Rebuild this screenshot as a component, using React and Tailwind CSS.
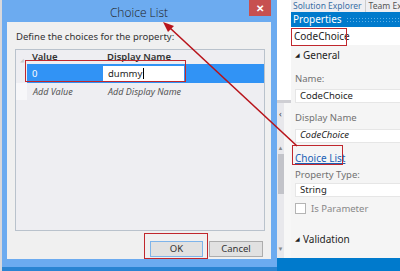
import React from 'react';

const font = "font-['Noto_Sans','Open_Sans',sans-serif]";

// Dialog "Choice List"
const ChoiceDialog = () => (
  <div className="flex h-[267px] w-[275px] shrink-0 flex-col bg-[#6cabf0] px-[5px] pr-[6px] pb-[8px]">
    {/* Title bar */}
    <div className="relative flex h-[22px] items-center justify-center pt-[3px]">
      <span className="font-['Open_Sans',sans-serif] text-[12px] font-light text-[#222]">Choice List</span>
      <div className="absolute right-0 top-0 flex h-[16px] w-[22px] items-center justify-center bg-[#c75050] text-[10px] font-bold leading-none text-white">
        ✕
      </div>
    </div>

    {/* Body */}
    <div className="flex flex-1 flex-col bg-[#f0f0f0] pt-[8px]">
      <div className="pl-[9px] text-[9.5px] text-[#333]">Define the choices for the property:</div>

      {/* Grid */}
      <div className="ml-[8px] mt-[5px] flex h-[182px] w-[250px] flex-col border border-[#b9c2cc] bg-[#eeeef2]">
        <div className="flex h-[14px] items-center">
          <div className="flex w-[11px] items-end justify-center self-stretch pb-[1px]">
            <span className="text-[5px] leading-none text-[#c8c8c8]">◢</span>
          </div>
          <span className="ml-[5px] w-[75px] text-[9.5px] font-semibold text-[#333]">Value</span>
          <span className="text-[9.5px] font-semibold text-[#333]">Display Name</span>
        </div>
        <div className="flex h-[19px] items-stretch">
          <div className="w-[11px] bg-[#eeeef2]" />
          <div className="flex flex-1 items-center bg-[#3193f5] pr-[2px]">
            <span className="ml-[5px] w-[71px] text-[9.5px] text-white">0</span>
            <div className="flex h-[16px] w-[81px] items-center bg-white pl-[5px] text-[9.5px] text-[#1e1e1e]">
              dummy<span className="ml-[1px] h-[11px] w-px bg-black" />
            </div>
          </div>
        </div>
        <div className="flex h-[17px] items-center">
          <div className="w-[11px] self-stretch bg-[#f7f7f9]" />
          <span className="ml-[6px] w-[75px] text-[9px] italic text-[#555]">Add Value</span>
          <span className="text-[9px] italic text-[#555]">Add Display Name</span>
        </div>
      </div>

      {/* Buttons */}
      <div className="mr-[8px] mt-[10px] flex justify-end gap-[6px]">
        <button className="flex h-[16px] w-[53px] items-center justify-center border border-[#7eb4ea] bg-[#e1e1e1] text-[9.5px] text-[#333]">
          OK
        </button>
        <button className="flex h-[16px] w-[54px] items-center justify-center border border-[#adadad] bg-[#e1e1e1] text-[9.5px] text-[#333]">
          Cancel
        </button>
      </div>
    </div>
  </div>
);

// Thin strip of the editor behind the dialog
const EditorStrip = () => (
  <div className="flex w-[14px] shrink-0 flex-col">
    <div className="h-[100px] bg-white" />
    <div className="h-[3px] bg-[#cfcfd4]" />
    <div className="flex flex-1">
      <div className="flex w-[7px] flex-col items-center bg-[#e8e8ec]">
        <span className="mt-[6px] text-[9px] leading-none text-[#444]">‹</span>
        <span className="mt-[27px] text-[6px] leading-none text-[#888]">▲</span>
        <div className="mt-[3px] h-[40px] w-[6px] bg-[#c2c3c9]" />
        <div className="flex-1" />
        <span className="mb-[6px] text-[6px] leading-none text-[#888]">▼</span>
      </div>
      <div className="flex-1 bg-[#f7f7f7]" />
    </div>
  </div>
);

const Field = ({ children, italic, className = 'mt-[3px]' }) => (
  <div className={`flex h-[14px] items-center border border-[#e6e6e6] bg-white pl-[4px] text-[9.5px] text-[#1e1e1e] ${italic ? 'italic' : ''} ${className}`}>
    {children}
  </div>
);

const Label = ({ children, className = '' }) => (
  <div className={`text-[9.5px] text-[#717171] ${className}`}>{children}</div>
);

const PropertiesPanel = () => (
  <div className="flex flex-1 flex-col overflow-hidden bg-[#f5f5f5]">
    {/* Tabs */}
    <div className="flex h-[12px] items-center overflow-hidden bg-[#eeeef2] text-[8.5px] leading-[12px] text-[#3b6ea5]">
      <span className="ml-[2px] whitespace-nowrap">Solution Explorer</span>
      <span className="ml-[3px] whitespace-nowrap border-l border-[#ccc] pl-[3px] text-[#555]">Team Ex</span>
    </div>
    {/* Title */}
    <div className="flex h-[15px] items-center bg-[#007acc] pl-[2px]">
      <span className="text-[10px] text-white">Properties</span>
      <div className="ml-[4px] h-[5px] flex-1 bg-[radial-gradient(circle,#5fb0e6_0.8px,transparent_0.9px)] bg-[length:3px_3px]" />
    </div>
    <div className="flex h-[18px] items-center bg-white pl-[3px] text-[10px] text-[#1e1e1e]">CodeChoice</div>

    <div className="flex flex-col pl-[4px]">
      <div className="mt-[3px] flex items-center gap-[3px] text-[10px] text-[#1e1e1e]">
        <span className="text-[6px]">◢</span>General
      </div>
      <Label className="mt-[9px]">Name:</Label>
      <Field>CodeChoice</Field>
      <Label className="mt-[8px]">Display Name</Label>
      <Field italic>CodeChoice</Field>
      <div className="mt-[8px] text-[10px] text-[#1a5fb4] underline">Choice List</div>
      <Label className="mt-[2px]">Property Type:</Label>
      <Field className="mt-[1px]">String</Field>
      <div className="mt-[5px] flex items-center gap-[5px]">
        <div className="h-[11px] w-[11px] border border-[#b4b4b4] bg-white" />
        <span className="text-[9.5px] text-[#888]">Is Parameter</span>
      </div>
      <div className="mt-[16px] flex items-center gap-[3px] text-[10px] text-[#1e1e1e]">
        <span className="text-[6px]">◢</span>Validation
      </div>
    </div>
  </div>
);

export default function App() {
  return (
    <div className={`relative flex h-[271px] w-[400px] overflow-hidden bg-[#2a84d2] ${font}`}>
      <div className="w-[2px] shrink-0 bg-[#d8d8dc]" />
      <ChoiceDialog />
      <div className="flex flex-1 flex-col">
        <div className="flex flex-1">
          <EditorStrip />
          <PropertiesPanel />
        </div>
        <div className="h-[13px] bg-[#007acc]" />
      </div>

      {/* Annotations */}
      <div className="pointer-events-none absolute left-[25px] top-[60px] h-[22px] w-[161px] border-[1.5px] border-[#c0272d]" />
      <div className="pointer-events-none absolute left-[144px] top-[233px] h-[26px] w-[64px] border-[1.5px] border-[#c0272d]" />
      <div className="pointer-events-none absolute left-[291px] top-[28px] h-[18px] w-[56px] border-[1.5px] border-[#c0272d]" />
      <div className="pointer-events-none absolute left-[292px] top-[145px] h-[20px] w-[51px] border-[1.5px] border-[#c0272d]" />
      <svg className="pointer-events-none absolute left-0 top-0" width="400" height="271">
        <line x1="297" y1="146" x2="170" y2="28" stroke="#b8141b" strokeWidth="1.6" />
        <polygon points="163,22 174,26 168,32" fill="#b8141b" />
      </svg>
    </div>
  );
}
